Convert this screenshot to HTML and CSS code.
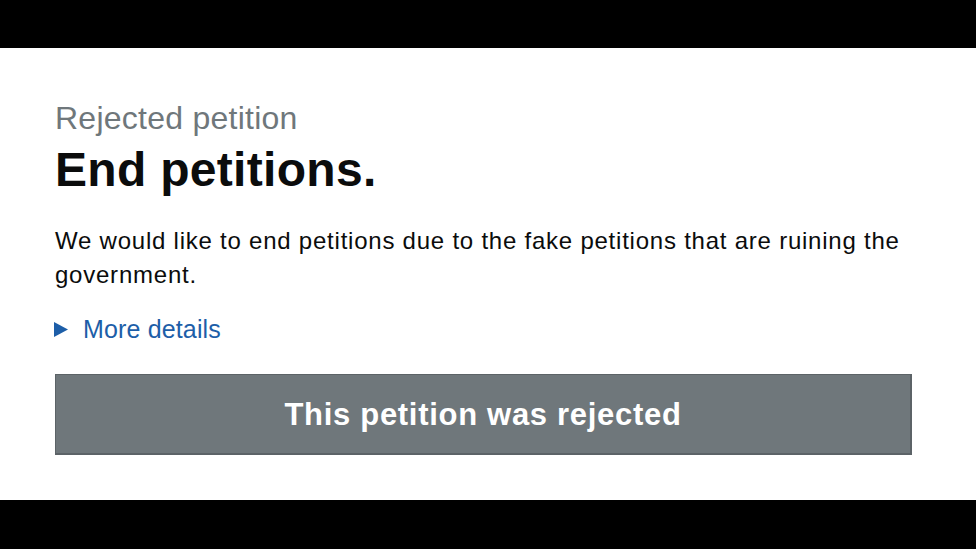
FILE: index.html
```html
<!DOCTYPE html>
<html lang="en">
<head>
<meta charset="utf-8">
<title>End petitions.</title>
<link rel="stylesheet" href="styles.css">
</head>
<body>
<div class="frame">
  <div class="bar"></div>
  <main class="page">
    <p class="kicker">Rejected petition</p>
    <h1 class="title">End petitions.</h1>
    <p class="lede">We would like to end petitions due to the fake petitions that are ruining the government.</p>
    <a class="details" href="#">
      <svg class="arrow" width="14" height="15" viewBox="0 0 14 15" aria-hidden="true"><polygon points="0,0 14,7.5 0,15" fill="#1d5ea8"/></svg>
      <span>More details</span>
    </a>
    <div class="status">This petition was rejected</div>
  </main>
  <div class="bar bottom"></div>
</div>
</body>
</html>
```

FILE: styles.css
```css
html, body {
  margin: 0;
  padding: 0;
  background: #000;
}

.frame {
  display: flex;
  flex-direction: column;
  height: 549px;
  font-family: "Liberation Sans", Arial, sans-serif;
}

.bar {
  height: 48px;
  background: #000;
  flex: none;
}

.bar.bottom {
  flex: 1;
}

.page {
  height: 452px;
  background: #fff;
  padding: 50px 64px 0 55px;
  box-sizing: border-box;
  display: flex;
  flex-direction: column;
}

.kicker {
  margin: 0;
  font-size: 32px;
  line-height: 40px;
  letter-spacing: 0.25px;
  color: #6f777b;
}

.title {
  margin: 6px 0 0;
  font-size: 48px;
  line-height: 52px;
  font-weight: 700;
  letter-spacing: 0.3px;
  color: #0b0c0c;
}

.lede {
  margin: 28px 0 0;
  font-size: 24px;
  line-height: 34px;
  color: #0b0c0c;
  letter-spacing: 0.77px;
}

.details {
  margin-top: 22px;
  display: flex;
  align-items: center;
  gap: 15px;
  font-size: 25px;
  line-height: 30px;
  letter-spacing: 0.15px;
  color: #1d5ea8;
  text-decoration: none;
  align-self: flex-start;
}

.arrow {
  display: block;
  margin-left: -1px;
}

.status {
  margin-top: 30px;
  height: 81px;
  box-sizing: border-box;
  background: #6f777b;
  border: 1px solid #5c6367;
  border-bottom-width: 2px;
  border-right-width: 2px;
  color: #fff;
  font-size: 31px;
  font-weight: 700;
  letter-spacing: 0.7px;
  padding-top: 2px;
  display: flex;
  align-items: center;
  justify-content: center;
}
```
